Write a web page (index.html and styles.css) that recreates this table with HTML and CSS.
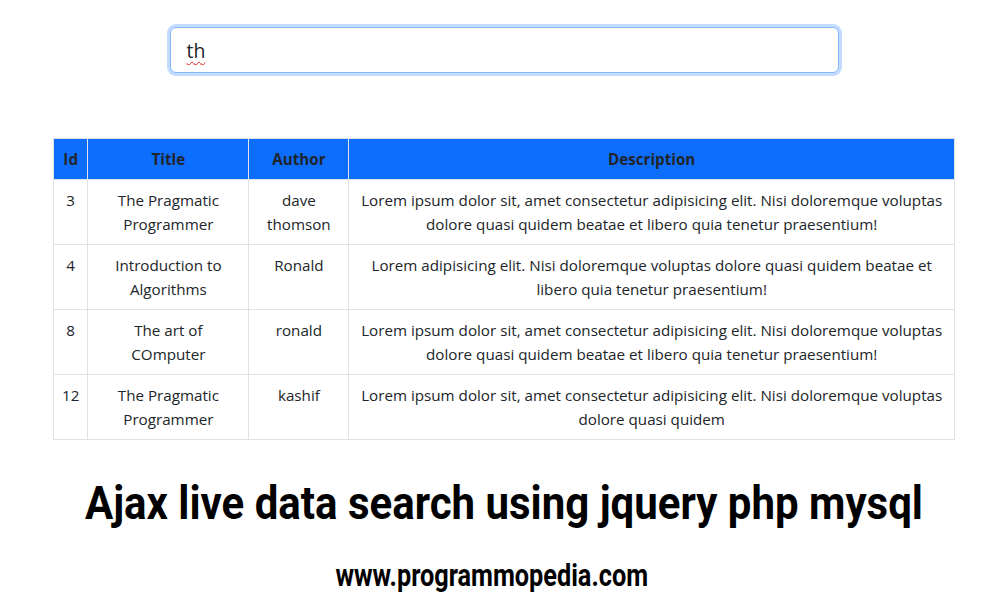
FILE: index.html
```html
<!DOCTYPE html>
<html>
<head>
<meta charset="utf-8">
<link rel="stylesheet" href="styles.css">
</head>
<body>
<div class="page">
  <div class="search"><span class="typed">th</span></div>
  <table class="data">
    <thead>
      <tr><th class="c-id">Id</th><th class="c-title">Title</th><th class="c-author">Author</th><th>Description</th></tr>
    </thead>
    <tbody>
      <tr><td>3</td><td>The Pragmatic Programmer</td><td>dave thomson</td><td>Lorem ipsum dolor sit, amet consectetur adipisicing elit. Nisi doloremque voluptas dolore quasi quidem beatae et libero quia tenetur praesentium!</td></tr>
      <tr><td>4</td><td>Introduction to Algorithms</td><td>Ronald</td><td>Lorem adipisicing elit. Nisi doloremque voluptas dolore quasi quidem beatae et libero quia tenetur praesentium!</td></tr>
      <tr><td>8</td><td>The art of COmputer</td><td>ronald</td><td>Lorem ipsum dolor sit, amet consectetur adipisicing elit. Nisi doloremque voluptas dolore quasi quidem beatae et libero quia tenetur praesentium!</td></tr>
      <tr><td>12</td><td>The Pragmatic Programmer</td><td>kashif</td><td>Lorem ipsum dolor sit, amet consectetur adipisicing elit. Nisi doloremque voluptas dolore quasi quidem</td></tr>
    </tbody>
  </table>
  <h1 class="headline">Ajax live data search using jquery php mysql</h1>
  <p class="site">www.programmopedia.com</p>
</div>
</body>
</html>
```
FILE: styles.css
```css
* { box-sizing: border-box; }
html, body { margin: 0; padding: 0; background: #fff; }
body {
  font-family: "Open Sans", "Noto Sans", sans-serif;
  color: #212529;
  width: 1004px;
  height: 616px;
  overflow: hidden;
}
.page {
  display: flex;
  flex-direction: column;
  align-items: center;
  padding-top: 27px;
  padding-left: 4px;
}
.search {
  width: 669px;
  height: 46px;
  padding: 0 16px;
  display: flex;
  align-items: center;
  font-size: 19.5px;
  color: #212529;
  background: #fff;
  border: 1px solid #86b7fe;
  border-radius: 6px;
  box-shadow: 0 0 0 3px #c2dbfe;
}
.typed {
  text-decoration: underline wavy #e02020;
  text-decoration-thickness: 1px;
  text-underline-offset: 3px;
}
.data {
  margin-top: 65px;
  width: 902px;
  border-collapse: collapse;
  font-size: 15.2px;
  line-height: 24px;
}
.data th, .data td {
  border: 1px solid #dee2e6;
  text-align: center;
  vertical-align: top;
  padding: 8px 8px;
}
.data th {
  background: #0d6efd;
  font-weight: 700;
  font-size: 15.2px;
  color: #212529;
  padding: 8px 8px 8px;
}
.data td { height: 65px; }
.c-id { width: 34px; }
.c-title { width: 161px; }
.c-author { width: 100px; }
.headline {
  margin: 35px 0 0;
  font-family: "Roboto", "Liberation Sans", sans-serif;
  font-weight: 700;
  font-size: 46px;
  line-height: 56px;
  color: #000;
  white-space: nowrap;
  transform: scaleX(0.913);
}
.site {
  margin: 27px 25px 0 0;
  font-family: "Roboto", "Liberation Sans", sans-serif;
  font-weight: 700;
  font-size: 31px;
  line-height: 36px;
  color: #000;
  white-space: nowrap;
  transform: scaleX(0.815);
}
```
